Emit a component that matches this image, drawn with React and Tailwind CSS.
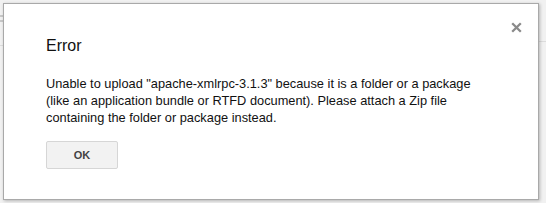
import React from "react";

export default function App() {
  return (
    <div
      className="w-[546px] h-[203px] bg-[#f1f1f1] overflow-hidden flex pt-[3px]"
      style={{ fontFamily: '"Liberation Sans", Arial, sans-serif' }}
    >
      <div className="w-[3px] flex flex-col pt-[12px] gap-[3px]">
        <div className="h-[2px] bg-[#c8c8c8]" />
        <div className="h-[2px] bg-[#c8c8c8]" />
        <div className="mt-[20px] h-px bg-[#dcdcdc]" />
      </div>
      <div className="relative w-[536px] h-[197px] bg-white border border-[#a9a9a9] shadow-[1px_1px_3px_rgba(0,0,0,0.25)] pl-[42px] pt-[32px]">
        <button className="absolute right-[16px] top-[17px] w-[12px] h-[12px] flex items-center justify-center">
          <svg width="11" height="11" viewBox="0 0 11 11">
            <path d="M1.2 1.2 L9.8 9.8 M9.8 1.2 L1.2 9.8" stroke="#8a8a8a" strokeWidth="2.3" strokeLinecap="butt" />
          </svg>
        </button>
        <div className="text-[16px] leading-[20px] text-[#111]">Error</div>
        <div className="mt-[19px] text-[12.8px] leading-[17px] text-[#111]">
          Unable to upload "apache-xmlrpc-3.1.3" because it is a folder or a package
          <br />
          (like an application bundle or RTFD document). Please attach a Zip file
          <br />
          containing the folder or package instead.
        </div>
        <button className="mt-[15px] w-[72px] h-[28px] bg-[#f2f2f2] border border-[#d6d6d6] rounded-[2px] text-[11px] font-bold text-[#444] flex items-center justify-center">
          OK
        </button>
      </div>
      <div className="flex-1 pt-[38px]">
        <div className="h-px bg-[#dcdcdc]" />
      </div>
    </div>
  );
}
